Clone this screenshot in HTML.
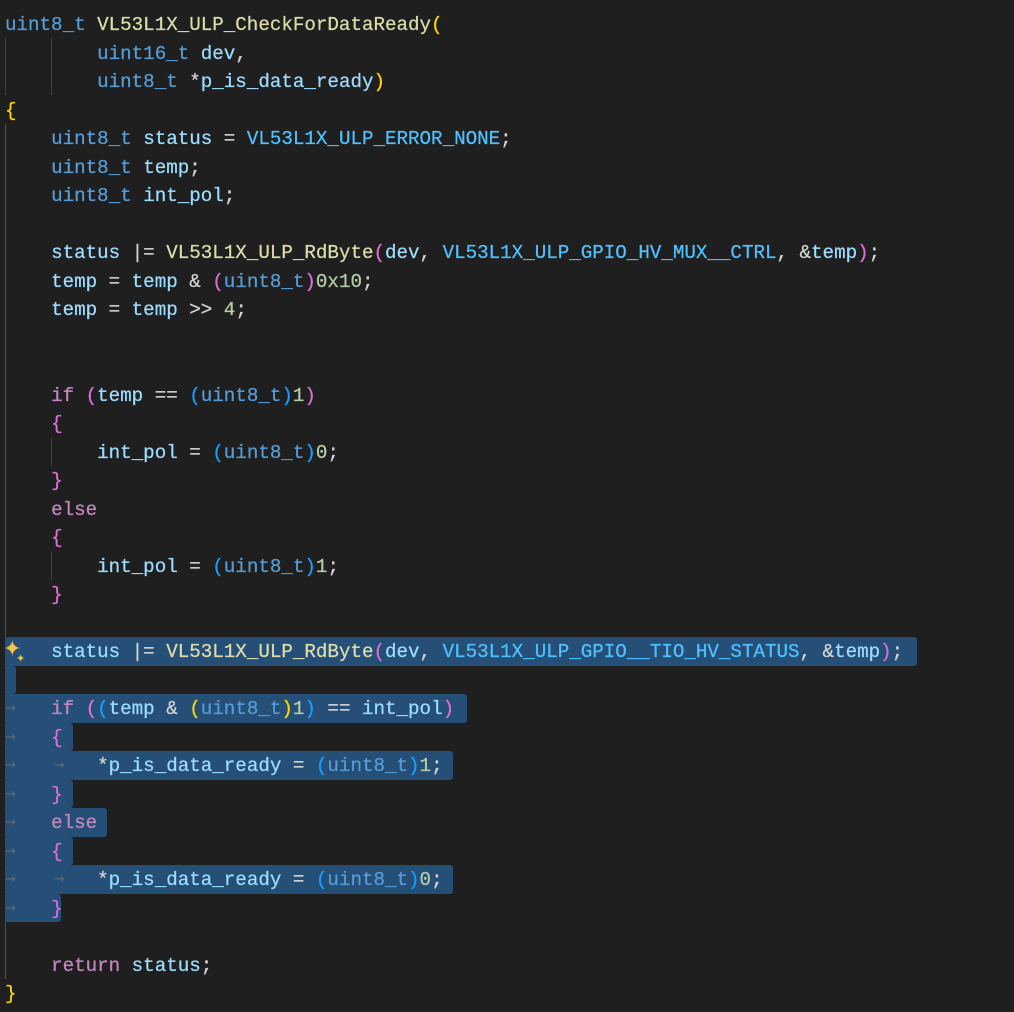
<!DOCTYPE html>
<html><head><meta charset="utf-8"><style>
html,body{margin:0;padding:0;background:#1f1f1f;width:1014px;height:1010px;overflow:hidden}
#w{position:absolute;left:0;top:2px;width:1014px;height:1010px}
.l{position:absolute;left:5px;height:28.5px;line-height:30px;white-space:pre;font-family:"Liberation Mono",monospace;font-size:19.2px;color:#d4d4d4;-webkit-text-stroke:0.25px currentColor}
.s{position:absolute;background:#264f78;height:28.5px;border-radius:3px}
.g{position:absolute;width:1px;background:#404040}
.t{color:#569cd6}.f{color:#dcdcaa}.v{color:#9cdcfe}.c{color:#4fc1ff}.k{color:#c586c0}.n{color:#b5cea8}
.y{color:#ffd700}.p{color:#da70d6}.b{color:#179fff}
.a{position:absolute;left:5px;color:#5a6a7a;font-family:"DejaVu Sans",sans-serif;font-size:13px;height:28.5px;line-height:30px}
</style></head><body><div id="w">
<div class="g" style="left:5px;top:36px;height:57px"></div>
<div class="g" style="left:51px;top:36px;height:57px"></div>
<div class="g" style="left:5px;top:122px;height:855px;background:#505050"></div>
<div class="g" style="left:51px;top:436px;height:28px"></div>
<div class="g" style="left:51px;top:550px;height:28px"></div>
<div class="g" style="left:51px;top:749px;height:28px"></div>
<div class="g" style="left:51px;top:863px;height:28px"></div>

<div class="s" style="left:5px;top:635px;width:912px"></div>
<div class="s" style="left:5px;top:663.5px;width:11px"></div>
<div class="s" style="left:5px;top:692px;width:462px"></div>
<div class="s" style="left:5px;top:720.5px;width:68px"></div>
<div class="s" style="left:5px;top:749px;width:448px"></div>
<div class="s" style="left:5px;top:777.5px;width:68px"></div>
<div class="s" style="left:5px;top:806px;width:102px"></div>
<div class="s" style="left:5px;top:834.5px;width:68px"></div>
<div class="s" style="left:5px;top:863px;width:448px"></div>
<div class="s" style="left:5px;top:891.5px;width:56px"></div>

<div class="a" style="top:692px">→</div>
<div class="a" style="top:720.5px">→</div>
<div class="a" style="top:749px">→</div>
<div class="a" style="top:777.5px">→</div>
<div class="a" style="top:806px">→</div>
<div class="a" style="top:834.5px">→</div>
<div class="a" style="top:863px">→</div>
<div class="a" style="top:891.5px">→</div>
<div class="a" style="top:749px;left:54px">→</div>
<div class="a" style="top:863px;left:54px">→</div>
<div style="position:absolute;left:3px;top:636px;color:#f5c542;font-size:22px;line-height:24px;font-family:'DejaVu Sans',sans-serif">✦</div>
<div style="position:absolute;left:16px;top:651px;color:#f5c542;font-size:11px;line-height:12px;font-family:'DejaVu Sans',sans-serif">✦</div>

<div class="l" style="top:8px"><span class="t">uint8_t</span> <span class="f">VL53L1X_ULP_CheckForDataReady</span><span class="y">(</span></div>
<div class="l" style="top:36.5px">        <span class="t">uint16_t</span> <span class="v">dev</span>,</div>
<div class="l" style="top:65px">        <span class="t">uint8_t</span> *<span class="v">p_is_data_ready</span><span class="y">)</span></div>
<div class="l" style="top:93.5px"><span class="y">{</span></div>
<div class="l" style="top:122px">    <span class="t">uint8_t</span> <span class="v">status</span> = <span class="c">VL53L1X_ULP_ERROR_NONE</span>;</div>
<div class="l" style="top:150.5px">    <span class="t">uint8_t</span> <span class="v">temp</span>;</div>
<div class="l" style="top:179px">    <span class="t">uint8_t</span> <span class="v">int_pol</span>;</div>
<div class="l" style="top:236px">    <span class="v">status</span> |= <span class="f">VL53L1X_ULP_RdByte</span><span class="p">(</span><span class="v">dev</span>, <span class="c">VL53L1X_ULP_GPIO_HV_MUX__CTRL</span>, &amp;<span class="v">temp</span><span class="p">)</span>;</div>
<div class="l" style="top:264.5px">    <span class="v">temp</span> = <span class="v">temp</span> &amp; <span class="p">(</span><span class="t">uint8_t</span><span class="p">)</span><span class="n">0x10</span>;</div>
<div class="l" style="top:293px">    <span class="v">temp</span> = <span class="v">temp</span> &gt;&gt; <span class="n">4</span>;</div>
<div class="l" style="top:378.5px">    <span class="k">if</span> <span class="p">(</span><span class="v">temp</span> == <span class="b">(</span><span class="t">uint8_t</span><span class="b">)</span><span class="n">1</span><span class="p">)</span></div>
<div class="l" style="top:407px">    <span class="p">{</span></div>
<div class="l" style="top:435.5px">        <span class="v">int_pol</span> = <span class="b">(</span><span class="t">uint8_t</span><span class="b">)</span><span class="n">0</span>;</div>
<div class="l" style="top:464px">    <span class="p">}</span></div>
<div class="l" style="top:492.5px">    <span class="k">else</span></div>
<div class="l" style="top:521px">    <span class="p">{</span></div>
<div class="l" style="top:549.5px">        <span class="v">int_pol</span> = <span class="b">(</span><span class="t">uint8_t</span><span class="b">)</span><span class="n">1</span>;</div>
<div class="l" style="top:578px">    <span class="p">}</span></div>
<div class="l" style="top:635px">    <span class="v">status</span> |= <span class="f">VL53L1X_ULP_RdByte</span><span class="p">(</span><span class="v">dev</span>, <span class="c">VL53L1X_ULP_GPIO__TIO_HV_STATUS</span>, &amp;<span class="v">temp</span><span class="p">)</span>;</div>
<div class="l" style="top:692px">    <span class="k">if</span> <span class="p">(</span><span class="b">(</span><span class="v">temp</span> &amp; <span class="y">(</span><span class="t">uint8_t</span><span class="y">)</span><span class="n">1</span><span class="b">)</span> == <span class="v">int_pol</span><span class="p">)</span></div>
<div class="l" style="top:720.5px">    <span class="p">{</span></div>
<div class="l" style="top:749px">        *<span class="v">p_is_data_ready</span> = <span class="b">(</span><span class="t">uint8_t</span><span class="b">)</span><span class="n">1</span>;</div>
<div class="l" style="top:777.5px">    <span class="p">}</span></div>
<div class="l" style="top:806px">    <span class="k">else</span></div>
<div class="l" style="top:834.5px">    <span class="p">{</span></div>
<div class="l" style="top:863px">        *<span class="v">p_is_data_ready</span> = <span class="b">(</span><span class="t">uint8_t</span><span class="b">)</span><span class="n">0</span>;</div>
<div class="l" style="top:891.5px">    <span class="p">}</span></div>
<div class="l" style="top:948.5px">    <span class="k">return</span> <span class="v">status</span>;</div>
<div class="l" style="top:977px"><span class="y">}</span></div>
</div></body></html>
